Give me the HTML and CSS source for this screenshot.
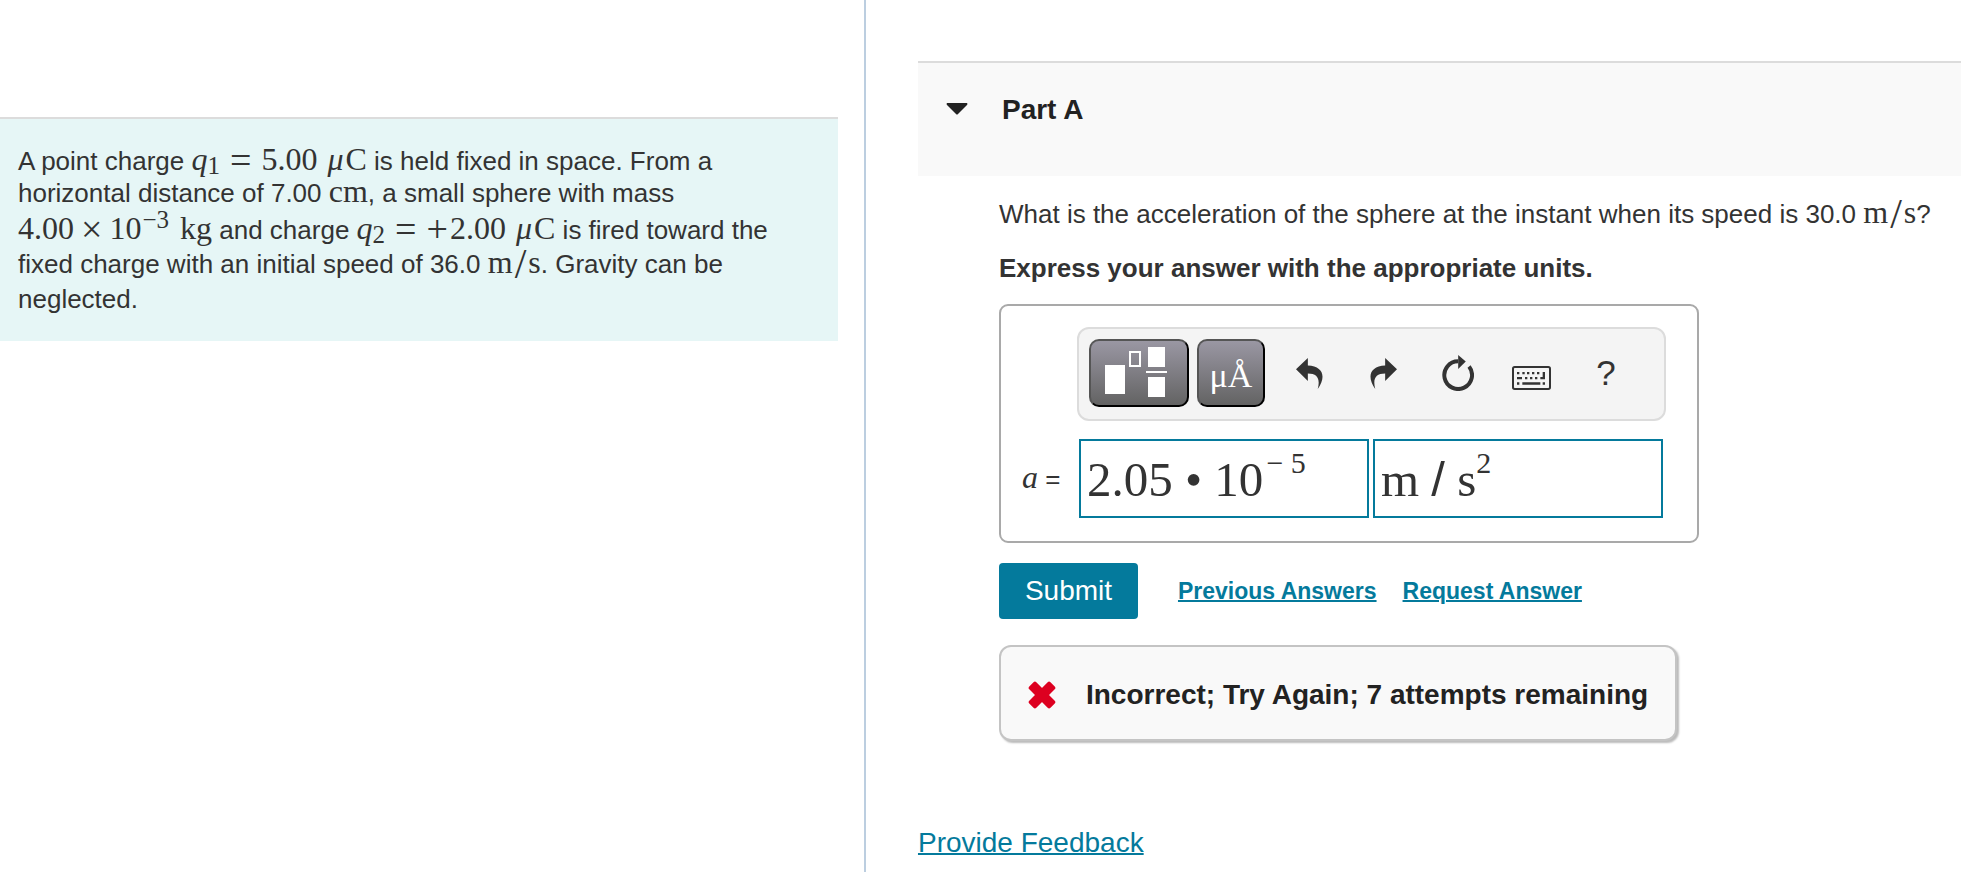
FILE: index.html
```
<!DOCTYPE html>
<html lang="en">
<head>
    <meta charset="UTF-8">
    <meta name="viewport" content="width=device-width, initial-scale=1.0">
    <title>Part A</title>
    <link rel="stylesheet" href="styles.css">
</head>
<body>
    <aside class="problem-panel">
        <div class="problem">
            <p>A point charge <span class="math"><i>q</i><sub>1</sub><span class="rel">=</span>5.00 <i class="mu">μ</i>C</span> is held fixed in space. From a horizontal distance of 7.00 <span class="math">cm</span>, a small sphere with mass <span class="math">4.00<span class="bin">×</span>10<sup>−3</sup> kg</span> and charge <span class="math"><i>q</i><sub>2</sub><span class="rel">=</span><span class="sign">+</span>2.00 <i class="mu">μ</i>C</span> is fired toward the fixed charge with an initial speed of 36.0 <span class="math has-slash">m<span class="slash">/</span>s</span>. Gravity can be neglected.</p>
        </div>
    </aside>

    <main class="work-panel">
        <header class="part-header">
            <button class="toggle" aria-label="Collapse Part A">
                <svg width="22" height="12" viewBox="0 0 22 12"><path d="M1 0h20q1 1 0 2l-9 9q-1 1-2 0L1 2Q0 1 1 0z"/></svg>
            </button>
            <h2>Part A</h2>
        </header>

        <section class="part-body">
            <p class="question">What is the acceleration of the sphere at the instant when its speed is 30.0 <span class="math has-slash">m<span class="slash">/</span>s</span>?</p>
            <p class="instructions">Express your answer with the appropriate units.</p>

            <div class="answer-box">
                <div class="toolbar">
                    <button class="palette templates" aria-label="Templates">
                        <svg width="62" height="50" viewBox="0 0 62 50">
                            <path d="M0 18h20v29H0zM43 0h17v20H43zM43 30h17v20H43zM41 24h21v2H41z" fill="#fff"/>
                            <rect x="25" y="5" width="10" height="14" fill="none" stroke="#fff" stroke-width="2"/>
                        </svg>
                    </button>
                    <button class="palette symbols" aria-label="Symbols">μÅ</button>
                    <button class="tool" aria-label="Undo">
                        <svg width="27" height="31" viewBox="0 0 82 94"><path d="M0 34L36 0V23C82 25 93 57 66 94C74 64 66 47 36 47V70z"/></svg>
                    </button>
                    <button class="tool" aria-label="Redo">
                        <svg width="27" height="31" viewBox="0 0 82 94"><path d="M82 34L46 0V23C0 25 -11 57 16 94C8 64 16 47 46 47V70z"/></svg>
                    </button>
                    <button class="tool" aria-label="Reset">
                        <svg width="32" height="36" viewBox="0 0 97 109">
                            <path d="M82 35A42 42 0 1 1 49 19" fill="none" stroke="#333" stroke-width="12"/>
                            <path d="M49 0L72 20L49 42z"/>
                        </svg>
                    </button>
                    <button class="tool keyboard" aria-label="Keyboard shortcuts">
                        <svg width="39" height="24" viewBox="0 0 117 72">
                            <rect x="3" y="3" width="111" height="66" rx="5" fill="none" stroke="#333" stroke-width="6"/>
                            <path d="M15 18h7v7h-7zM31 18h7v7h-7zM45 18h7v7h-7zM60 18h7v7h-7zM75 18h7v7h-7zM92 18h7v22H85v-7h7zM15 33h15v7H15zM39 33h7v7h-7zM54 33h7v7h-7zM69 33h7v7h-7zM15 49h7v7h-7zM31 49h54v7H31zM92 49h7v7h-7z"/>
                        </svg>
                    </button>
                    <button class="tool" aria-label="Help">?</button>
                </div>
                <div class="answer-row">
                    <span class="answer-label" id="answer-label"><i>a</i> =</span>
                    <div class="field" contenteditable="true" role="textbox" aria-labelledby="answer-label">2.05 • 10<sup class="exponent">− 5</sup></div>
                    <div class="field" contenteditable="true" role="textbox" aria-label="Units">m <span class="over">/</span> s<sup>2</sup></div>
                </div>
            </div>

            <div class="actions">
                <button class="submit">Submit</button>
                <a href="#previous">Previous Answers</a>
                <a href="#request">Request Answer</a>
            </div>

            <div class="result" role="status">
                <svg width="28" height="28" viewBox="0 0 28 28" fill="#dd0020">
                    <rect x="-1" y="9" width="30" height="10" rx="2" transform="rotate(45 14 14)"/>
                    <rect x="-1" y="9" width="30" height="10" rx="2" transform="rotate(-45 14 14)"/>
                </svg>
                <span>Incorrect; Try Again; 7 attempts remaining</span>
            </div>
        </section>

        <a class="feedback" href="#feedback">Provide Feedback</a>
    </main>
</body>
</html>
```
FILE: styles.css
```
* {
    box-sizing: border-box;
}

body {
    margin: 0;
    display: flex;
    min-height: 100vh;
    background-color: #fff;
    color: #333;
    font-family: "Liberation Sans", Arial, sans-serif;
    font-size: 26px;
    line-height: 31px;
}

p, h2 {
    margin: 0;
}

button {
    padding: 0;
    border: none;
    background: none;
    color: inherit;
    font-family: inherit;
    cursor: pointer;
}

a {
    color: #047a9c;
    text-decoration-thickness: 2px;
}

svg {
    display: block;
}

/* Left panel */
.problem-panel {
    flex: none;
    width: 44.16%;
    padding: 117px 26px 0 0;
    border-right: 2px solid #bccee0;
}

.problem {
    padding: 26px 50px 26px 18px;
    border-top: 2px solid #dcdcdc;
    background-color: #e6f6f6;
}

/* Math */
.math {
    display: inline-block;
    font-family: "Liberation Serif", "Times New Roman", serif;
    font-size: 32px;
    line-height: 28px;
    white-space: nowrap;
}

.has-slash {
    padding: 2px 0 8px;
}

.math sub,
.math sup {
    font-size: 25px;
    line-height: 22px;
}

.math sub {
    vertical-align: -4px;
}

.math sup {
    margin: 0 3px 0 1px;
    vertical-align: 11px;
}

.rel,
.bin,
.sign {
    font-size: 38px;
    line-height: 20px;
    vertical-align: -3px;
}

.rel {
    margin: 0 10px;
}

.sign {
    margin-right: 2px;
}

.bin {
    margin: 0 7px;
}

.mu {
    margin: 0 2px;
}

.slash {
    margin: 0 2px;
    font-size: 42px;
    line-height: 24px;
    vertical-align: -5px;
}

/* Right panel */
.work-panel {
    flex: 1;
    min-width: 0;
    padding: 61px 0 0 52px;
}

.part-header {
    display: flex;
    align-items: flex-start;
    gap: 34px;
    padding: 31px 28px 51px;
    border-top: 2px solid #dcdcdc;
    background-color: #f9f9f9;
    color: #222;
}

.part-header h2 {
    font-size: 28px;
    line-height: 31px;
}

.toggle {
    padding-top: 9px;
    fill: #222;
}

.part-body {
    padding: 20px 16px 0 81px;
}

.instructions {
    margin-top: 19px;
    font-weight: bold;
}

.answer-box {
    width: 700px;
    max-width: 100%;
    margin-top: 20px;
    padding: 21px 31px 23px 21px;
    border: 2px solid #a9a9a9;
    border-radius: 9px;
}

.toolbar {
    display: flex;
    height: 94px;
    margin-left: 55px;
    padding: 10px;
    border: 2px solid #dcdcdc;
    border-radius: 12px;
    background-color: #f4f4f4;
}

.palette {
    display: flex;
    align-items: center;
    justify-content: center;
    height: 68px;
    margin-right: 8px;
    border: 2px solid;
    border-color: #555 #000 #000 #555;
    border-radius: 10px;
    background: linear-gradient(#9a97a3, #636363);
    color: #fff;
}

.templates {
    width: 100px;
    padding: 0 6px 2px 0;
}

.symbols {
    width: 68px;
    padding-top: 6px;
    font-family: "Liberation Serif", "Times New Roman", serif;
    font-size: 34px;
}

.tool {
    display: flex;
    align-items: center;
    justify-content: center;
    width: 74px;
    height: 68px;
    font-size: 35px;
    fill: #333;
}

.keyboard {
    padding-top: 10px;
}

.answer-row {
    display: flex;
    align-items: center;
    gap: 4px;
    margin-top: 18px;
}

.answer-label {
    flex: none;
    width: 53px;
}

.answer-label i {
    font-family: "Liberation Serif", "Times New Roman", serif;
    font-size: 32px;
}

.field {
    flex: 0 1 290px;
    height: 79px;
    padding-left: 6px;
    border: 2px solid #047a9c;
    font-family: "Liberation Serif", "Times New Roman", serif;
    font-size: 49px;
    line-height: 78px;
    white-space: nowrap;
}

.field sup {
    font-size: 30px;
    line-height: 30px;
    vertical-align: 23px;
}

.exponent {
    margin-left: 3px;
}

.over {
    font-family: "Liberation Sans", Arial, sans-serif;
    line-height: 60px;
}

.actions {
    display: flex;
    align-items: center;
    gap: 26px;
    margin-top: 20px;
}

.actions a {
    font-size: 23px;
    font-weight: bold;
}

.submit {
    width: 139px;
    height: 56px;
    margin-right: 14px;
    border-radius: 4px;
    background-color: #047a9c;
    color: #fff;
    font-size: 28px;
}

.result {
    display: flex;
    align-items: center;
    gap: 30px;
    width: fit-content;
    height: 96px;
    margin-top: 26px;
    padding: 3px 27px 0;
    border: 2px solid #c4c4c4;
    border-radius: 12px;
    background-color: #f9f9f9;
    box-shadow: 2px 2px 2px #bbb;
    color: #222;
    font-size: 28px;
    font-weight: bold;
}

.feedback {
    display: inline-block;
    margin-top: 86px;
    font-size: 28px;
}
```
